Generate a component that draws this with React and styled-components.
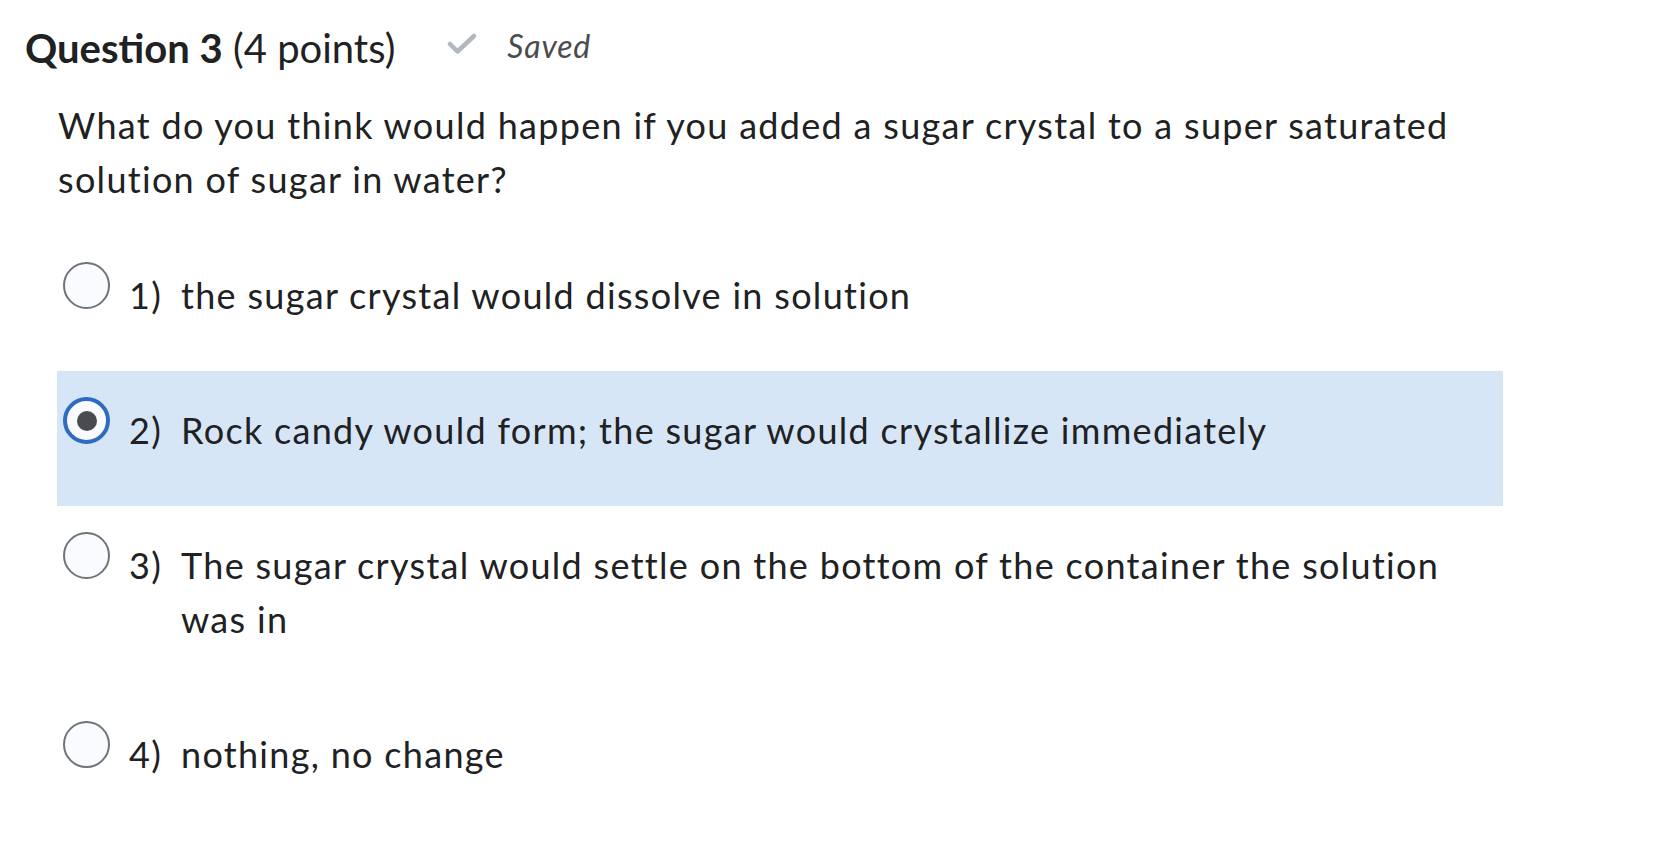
import React, { useState } from "react";
import styled, { createGlobalStyle } from "styled-components";

const colors = {
  text: "#202122",
  muted: "#494c4e",
  check: "#b1b9be",
  radioBorder: "#6e7477",
  radioFill: "#f9fbff",
  selectedBorder: "#2e6cbf",
  selectedBg: "#d7e6f7",
};

const GlobalStyle = createGlobalStyle`
  body {
    margin: 0;
    background: #ffffff;
    color: ${colors.text};
    font-family: Lato, "Open Sans", "Liberation Sans", sans-serif;
  }
`;

const Page = styled.div`
  padding: 24px 0 0 25px;
`;

const Header = styled.div`
  display: flex;
  align-items: flex-start;
`;

const Title = styled.h2`
  margin: 0;
  font-size: 40px;
  line-height: 48px;
  font-weight: 400;

  strong {
    font-weight: 700;
  }
`;

const Status = styled.div`
  display: flex;
  align-items: center;
  margin: 4px 0 0 52px;
  gap: 30px;
  font-size: 32px;
  line-height: 36px;
  letter-spacing: 0.8px;
  font-style: italic;
  color: ${colors.muted};
`;

const CheckIcon = styled.svg`
  width: 30px;
  height: 22px;
  margin-top: -4px;
`;

const Prompt = styled.p`
  margin: 26px 0 0 33px;
  max-width: 1440px;
  font-size: 36px;
  line-height: 54px;
  letter-spacing: 1.3px;
`;

const Options = styled.div`
  margin: 30px 0 0 32px;
  width: 1446px;
`;

const Row = styled.label`
  display: flex;
  align-items: flex-start;
  padding: 32px 20px 49px 6px;
  background: ${(p) => (p.$selected ? colors.selectedBg : "transparent")};
  cursor: pointer;
`;

const Radio = styled.span`
  box-sizing: border-box;
  flex: none;
  width: 47px;
  height: 47px;
  margin-top: -6px;
  border-radius: 50%;
  background: ${colors.radioFill};
  border: ${(p) =>
    p.$checked ? `4px solid ${colors.selectedBorder}` : `2px solid ${colors.radioBorder}`};
  display: flex;
  align-items: center;
  justify-content: center;

  &::after {
    content: "";
    display: ${(p) => (p.$checked ? "block" : "none")};
    width: 20px;
    height: 20px;
    border-radius: 50%;
    background: ${colors.muted};
  }
`;

const Number = styled.span`
  flex: none;
  width: 52px;
  margin-left: 19px;
  font-size: 36px;
  line-height: 54px;
  letter-spacing: 1.3px;
`;

const Answer = styled.span`
  flex: 1;
  font-size: 36px;
  line-height: 54px;
  letter-spacing: 1.3px;
`;

const answers = [
  "the sugar crystal would dissolve in solution",
  "Rock candy would form; the sugar would crystallize immediately",
  "The sugar crystal would settle on the bottom of the container the solution was in",
  "nothing, no change",
];

export default function App() {
  const [choice, setChoice] = useState(1);

  return (
    <>
      <GlobalStyle />
      <Page>
        <Header>
          <Title>
            <strong>Question 3</strong> (4 points)
          </Title>
          <Status>
            <CheckIcon viewBox="0 0 30 22">
              <polyline
                points="3,11 10.5,18.5 27,3"
                fill="none"
                stroke={colors.check}
                strokeWidth="4.5"
                strokeLinecap="round"
                strokeLinejoin="round"
              />
            </CheckIcon>
            Saved
          </Status>
        </Header>
        <Prompt>
          What do you think would happen if you added a sugar crystal to a super saturated
          solution of sugar in water?
        </Prompt>
        <Options>
          {answers.map((text, i) => (
            <Row key={i} $selected={choice === i} onClick={() => setChoice(i)}>
              <Radio $checked={choice === i} />
              <Number>{i + 1})</Number>
              <Answer>{text}</Answer>
            </Row>
          ))}
        </Options>
      </Page>
    </>
  );
}
